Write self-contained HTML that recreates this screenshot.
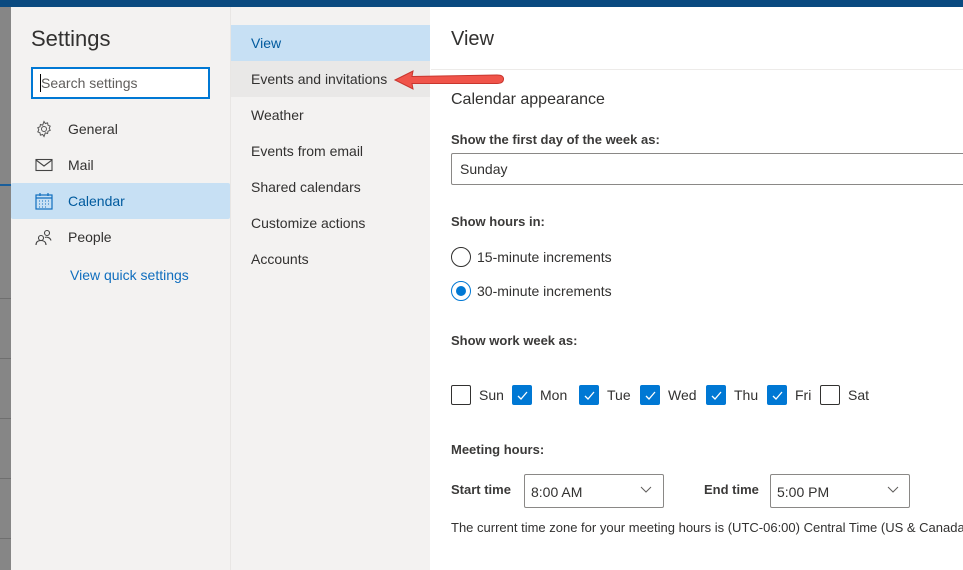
<!DOCTYPE html>
<html><head><meta charset="utf-8"><style>
*{margin:0;padding:0;box-sizing:border-box}
body{width:963px;height:570px;overflow:hidden;position:relative;background:#fff;font-family:"Segoe UI","Liberation Sans",sans-serif;color:#323130;font-size:14px}
.a{position:absolute;white-space:nowrap}
.t{margin-top:1px}
.cb{position:absolute;width:20px;height:20px;border:1px solid #323130;border-radius:2px;background:#fff}
.cb.on{background:#0078d4;border-color:#0078d4}
.cb.on svg{position:absolute;left:3px;top:3px}
.sel{position:absolute;border:1px solid #8a8886;border-radius:2px;background:#fff;height:34px}
.b{font-weight:bold;font-size:13px;color:#3b3a39}
</style></head><body>
<div class="a" style="left:0;top:0;width:963px;height:7px;background:#0a4a80"></div>
<div class="a" style="left:0;top:7px;width:11px;height:563px;background:#868686"></div>
<div class="a" style="left:0;top:184px;width:11px;height:2px;background:#1a5e9a"></div>
<div class="a" style="left:0;top:298px;width:11px;height:1px;background:#6f6f6f"></div>
<div class="a" style="left:0;top:358px;width:11px;height:1px;background:#6f6f6f"></div>
<div class="a" style="left:0;top:418px;width:11px;height:1px;background:#6f6f6f"></div>
<div class="a" style="left:0;top:478px;width:11px;height:1px;background:#6f6f6f"></div>
<div class="a" style="left:0;top:538px;width:11px;height:1px;background:#6f6f6f"></div>
<div class="a" style="left:11px;top:7px;width:219px;height:563px;background:#f3f2f1"></div>
<div class="a" style="left:230px;top:7px;width:200px;height:563px;background:#f3f2f1;border-left:1px solid #e8e6e4"></div>
<div class="a" style="left:431px;top:69px;width:532px;height:1px;background:#edebe9"></div>

<div class="a" style="left:31px;top:26px;font-size:22px;color:#323130">Settings</div>
<div class="a" style="left:31px;top:67px;width:179px;height:32px;border:2px solid #0078d4;background:#fff"></div>
<div class="a" style="left:40px;top:74px;width:1px;height:18px;background:#000"></div>
<div class="a t" style="left:41px;top:74px;color:#605e5c">Search settings</div>

<svg class="a" style="left:35px;top:120px" width="18" height="18" viewBox="0 0 18 18" fill="none" stroke="#555" stroke-width="1"><circle cx="9" cy="9" r="2.5"/><path d="M9 1.5l1.3 2 2.3-.6.4 2.3 2.2.9-1 2.1 1 2.1-2.2.9-.4 2.3-2.3-.6L9 16.5l-1.3-2-2.3.6-.4-2.3-2.2-.9 1-2.1-1-2.1 2.2-.9.4-2.3 2.3.6z"/></svg>
<div class="a t" style="left:68px;top:120px">General</div>
<svg class="a" style="left:35px;top:158px" width="18" height="14" viewBox="0 0 18 14" fill="none" stroke="#444" stroke-width="1.1"><rect x="1" y="1.5" width="16" height="11"/><path d="M1 2l8 6 8-6"/></svg>
<div class="a t" style="left:68px;top:156px">Mail</div>
<div class="a" style="left:11px;top:183px;width:219px;height:36px;background:#c7e0f4;border-radius:2px"></div>
<svg class="a" style="left:35px;top:192px" width="18" height="18" viewBox="0 0 18 18" fill="none" stroke="#106ebe" stroke-width="1.2"><rect x="1" y="3" width="16" height="14"/><path d="M1 6h16M5 1v3M13 1v3"/><path d="M4 9h1M7 9h1M10 9h1M13 9h1M4 12h1M7 12h1M10 12h1M13 12h1M4 15h1M7 15h1M10 15h1" stroke-width="1"/></svg>
<div class="a t" style="left:68px;top:192px;color:#005a9e">Calendar</div>
<svg class="a" style="left:35px;top:228px" width="18" height="18" viewBox="0 0 18 18" fill="none" stroke="#444" stroke-width="1.1"><circle cx="6" cy="10" r="2.5"/><path d="M1 17c0-3 2-4.5 5-4.5s5 1.5 5 4.5"/><circle cx="12" cy="5" r="2.5"/><path d="M10 9.5c1-.7 5-.5 6 3"/></svg>
<div class="a t" style="left:68px;top:228px">People</div>
<div class="a t" style="left:70px;top:266px;color:#106ebe">View quick settings</div>

<div class="a" style="left:231px;top:25px;width:199px;height:36px;background:#c7e0f4"></div>
<div class="a t" style="left:251px;top:34px;color:#005a9e">View</div>
<div class="a" style="left:231px;top:61px;width:199px;height:36px;background:#e9e8e7"></div>
<div class="a t" style="left:251px;top:70px">Events and invitations</div>
<div class="a t" style="left:251px;top:106px">Weather</div>
<div class="a t" style="left:251px;top:142px">Events from email</div>
<div class="a t" style="left:251px;top:178px">Shared calendars</div>
<div class="a t" style="left:251px;top:214px">Customize actions</div>
<div class="a t" style="left:251px;top:250px">Accounts</div>

<svg class="a" style="left:392px;top:66px" width="116" height="28" viewBox="0 0 116 28"><path d="M3 14L21 5 L20 10.5 L105 9 Q112 9 111.5 13.5 Q111 17.5 105 17.5 L20 17.5 L21 23Z" fill="#f0544a" stroke="#c8362e" stroke-width="1"/></svg>

<div class="a" style="left:451px;top:28px;font-size:20px">View</div>
<div class="a" style="left:451px;top:91px;font-size:16px">Calendar appearance</div>
<div class="a b" style="left:451px;top:132px">Show the first day of the week as:</div>
<div class="sel" style="left:451px;top:153px;width:530px;height:32px"></div>
<div class="a t" style="left:460px;top:160px">Sunday</div>
<div class="a b" style="left:451px;top:214px">Show hours in:</div>
<div class="a" style="left:451px;top:247px;width:20px;height:20px;border:1px solid #323130;border-radius:50%"></div>
<div class="a t" style="left:477px;top:248px">15-minute increments</div>
<div class="a" style="left:451px;top:281px;width:20px;height:20px;border:1px solid #0078d4;border-radius:50%"></div>
<div class="a" style="left:456px;top:286px;width:10px;height:10px;background:#0078d4;border-radius:50%"></div>
<div class="a t" style="left:477px;top:282px">30-minute increments</div>
<div class="a b" style="left:451px;top:333px">Show work week as:</div>

<div class="cb" style="left:451px;top:385px"></div><div class="a t" style="left:479px;top:386px">Sun</div>
<div class="cb on" style="left:512px;top:385px"><svg width="13" height="13" viewBox="0 0 13 13" fill="none" stroke="#fff" stroke-width="1.3"><path d="M2 7l3 3 6-7"/></svg></div><div class="a t" style="left:540px;top:386px">Mon</div>
<div class="cb on" style="left:579px;top:385px"><svg width="13" height="13" viewBox="0 0 13 13" fill="none" stroke="#fff" stroke-width="1.3"><path d="M2 7l3 3 6-7"/></svg></div><div class="a t" style="left:607px;top:386px">Tue</div>
<div class="cb on" style="left:640px;top:385px"><svg width="13" height="13" viewBox="0 0 13 13" fill="none" stroke="#fff" stroke-width="1.3"><path d="M2 7l3 3 6-7"/></svg></div><div class="a t" style="left:668px;top:386px">Wed</div>
<div class="cb on" style="left:706px;top:385px"><svg width="13" height="13" viewBox="0 0 13 13" fill="none" stroke="#fff" stroke-width="1.3"><path d="M2 7l3 3 6-7"/></svg></div><div class="a t" style="left:734px;top:386px">Thu</div>
<div class="cb on" style="left:767px;top:385px"><svg width="13" height="13" viewBox="0 0 13 13" fill="none" stroke="#fff" stroke-width="1.3"><path d="M2 7l3 3 6-7"/></svg></div><div class="a t" style="left:795px;top:386px">Fri</div>
<div class="cb" style="left:820px;top:385px"></div><div class="a t" style="left:848px;top:386px">Sat</div>

<div class="a b" style="left:451px;top:442px">Meeting hours:</div>
<div class="a b" style="left:451px;top:482px">Start time</div>
<div class="sel" style="left:524px;top:474px;width:140px"></div>
<div class="a t" style="left:531px;top:483px">8:00 AM</div>
<svg class="a" style="left:640px;top:486px" width="12" height="8" viewBox="0 0 12 8" fill="none" stroke="#605e5c"><path d="M1 1l5 5 5-5"/></svg>
<div class="a b" style="left:704px;top:482px">End time</div>
<div class="sel" style="left:770px;top:474px;width:140px"></div>
<div class="a t" style="left:777px;top:483px">5:00 PM</div>
<svg class="a" style="left:887px;top:486px" width="12" height="8" viewBox="0 0 12 8" fill="none" stroke="#605e5c"><path d="M1 1l5 5 5-5"/></svg>
<div class="a" style="left:451px;top:520px;font-size:13px">The current time zone for your meeting hours is (UTC-06:00) Central Time (US &amp; Canada)</div>
</body></html>
